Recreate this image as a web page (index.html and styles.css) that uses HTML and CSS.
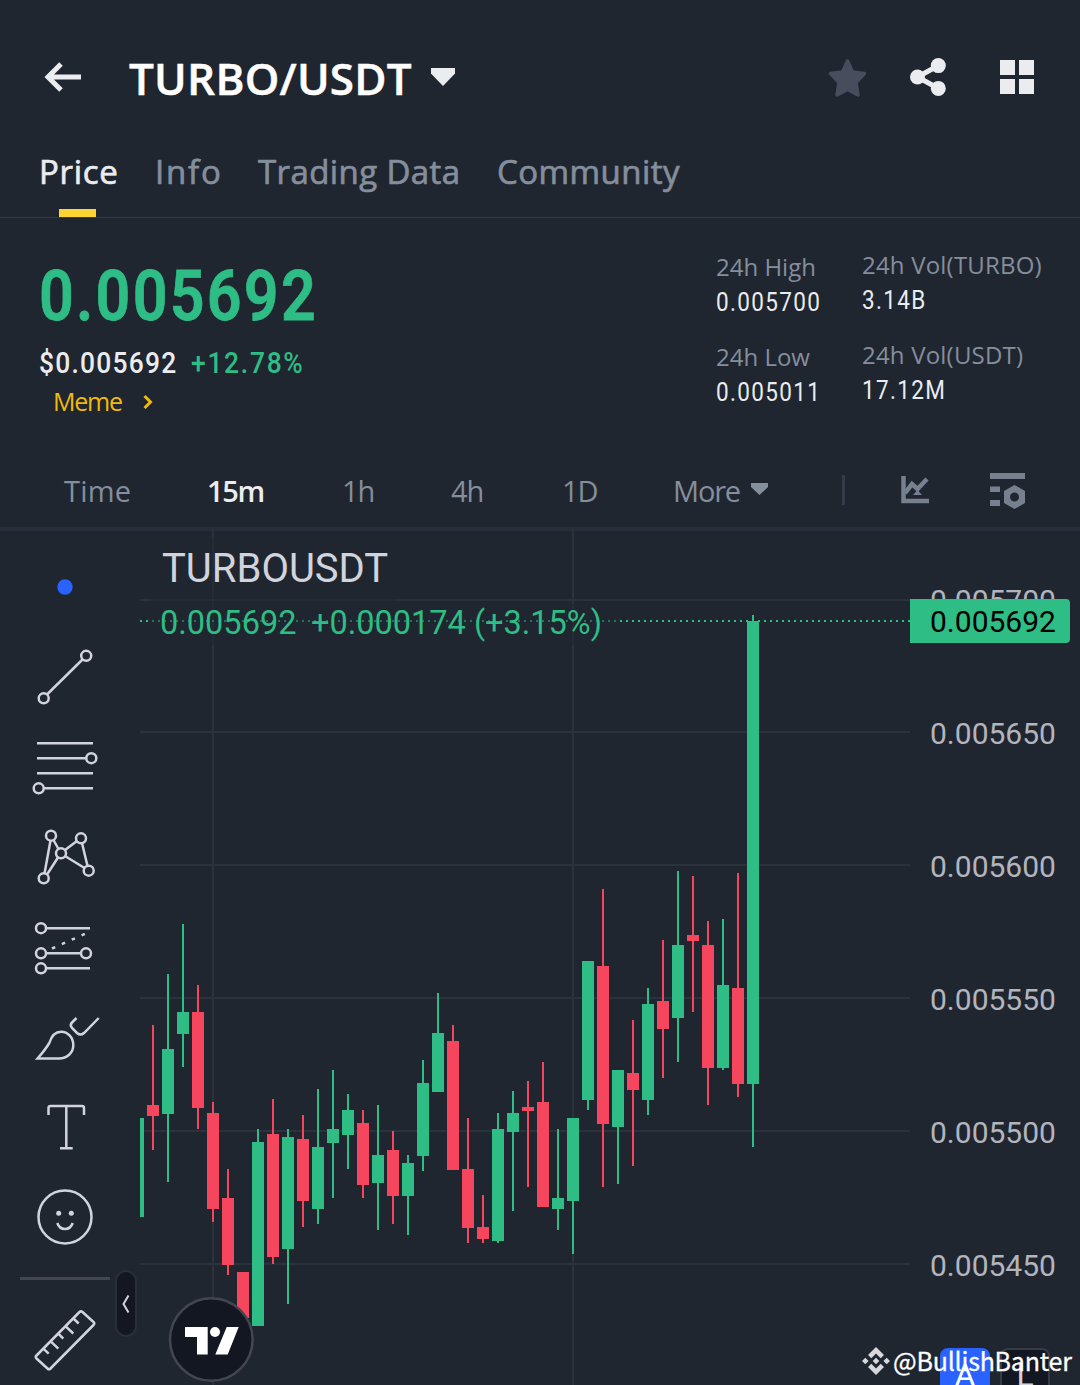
FILE: index.html
```html
<!DOCTYPE html>
<html lang="en">
<head>
<meta charset="utf-8">
<title>TURBO/USDT</title>
<link rel="stylesheet" href="styles.css">
</head>
<body>
<div class="app">
  <header class="header">
    <svg class="back" width="37" height="30" viewBox="0 0 37 30"><path d="M37 15H4M17 2L4 15L17 28" fill="none" stroke="#eaecef" stroke-width="5"/></svg>
    <h1 class="pair">TURBO/USDT</h1>
    <svg class="pair-caret" width="24" height="18" viewBox="0 0 24 18"><path d="M0 0H24V5.5L12 18L0 5.5Z" fill="#eaecef"/></svg>
    <div class="actions">
      <svg class="star" width="39" height="40" viewBox="0 0 39 40"><path d="M19.5 3L24.5 14L36.5 15.5L28 24.500L30 37L19.500 31.500L9 37L11 24.500L2.500 15.500L14.500 14Z" fill="#474d5c" stroke="#474d5c" stroke-width="3.500" stroke-linejoin="round"/></svg>
      <svg width="36" height="38" viewBox="0 0 36 38"><path d="M28.500 7.500L7.500 19L28.500 30.500" fill="none" stroke="#eaecef" stroke-width="5"/><g fill="#eaecef"><circle cx="28.300" cy="7.600" r="7.500"/><circle cx="7.500" cy="19" r="7.500"/><circle cx="28.300" cy="30.400" r="7.500"/></g></svg>
      <svg width="34" height="34" viewBox="0 0 34 34"><path d="M0 0H15V15H0ZM19 0H34V15H19ZM0 19H15V34H0ZM19 19H34V34H19Z" fill="#eaecef"/></svg>
    </div>
  </header>

  <nav class="tabs">
    <span class="tab tab-active">Price</span>
    <span class="tab tab-info">Info</span>
    <span class="tab tab-data">Trading Data</span>
    <span class="tab tab-community">Community</span>
  </nav>

  <section class="summary">
    <div class="quote">
      <div class="last">0.005692</div>
      <div class="sub"><span class="fiat">$0.005692</span><span class="change">+12.78%</span></div>
      <div class="tag"><span class="tag-name">Meme</span><svg width="10" height="14" viewBox="0 0 10 14"><path d="M1.500 1L7.500 7L1.500 13" fill="none" stroke="#f0b90b" stroke-width="3"/></svg></div>
    </div>
    <dl class="stats">
      <dt>24h High</dt><dd>0.005700</dd>
      <dt class="second">24h Low</dt><dd>0.005011</dd>
    </dl>
    <dl class="stats stats-vol">
      <dt>24h Vol(TURBO)</dt><dd>3.14B</dd>
      <dt class="second">24h Vol(USDT)</dt><dd>17.12M</dd>
    </dl>
  </section>

  <nav class="frames">
    <span class="frame-time">Time</span><span class="frame-active">15m</span><span>1h</span><span>4h</span><span>1D</span>
    <span class="more"><span class="more-name">More</span><svg width="17" height="12" viewBox="0 0 17 12"><path d="M0 0H17V4L8.500 12L0 4Z" fill="#848e9c"/></svg></span>
    <i class="bar"></i>
    <svg class="indicator" width="28" height="28" viewBox="0 0 28 28"><g fill="none" stroke="#76808f" stroke-width="4.500"><path d="M2.500 0V25H28"/><path d="M4 17L11 8L16.500 13L26 3"/></g><path d="M16.500 14L21 19H12Z" fill="#76808f"/></svg>
    <svg width="35" height="36" viewBox="0 0 35 36"><path d="M0 0H35V6H0ZM0 13.500H10V19H0ZM0 27H10V33H0Z" fill="#76808f"/><path fill-rule="evenodd" d="M24.500 12L35 18V30L24.500 36L14 30V18ZM24.500 19.500A4.500 4.500 0 1 0 24.500 28.500A4.500 4.500 0 1 0 24.500 19.500Z" fill="#76808f"/></svg>
  </nav>

  <main class="workspace">
    <aside class="tools">
      <svg class="tool" viewBox="0 0 90 90"><circle cx="45" cy="45" r="7.700" fill="#2962ff"/></svg>
      <svg class="tool" viewBox="0 0 90 90"><path d="M27 62.500L62.500 27.500"/><circle cx="23.700" cy="66.300" r="5"/><circle cx="66.200" cy="23.800" r="5"/></svg>
      <svg class="tool" viewBox="0 0 90 90"><path d="M17 21.200H73M17 36.200H66M17 51.200H73M24 66.300H73"/><circle cx="71.300" cy="36.200" r="5"/><circle cx="18.700" cy="66.300" r="5"/></svg>
      <svg class="tool" viewBox="0 0 90 90"><path d="M30.500 28.500L24.500 61.500M33.500 28L38.500 37M57 29L45 38M45 44L64.500 56M38 45.500L27 62.500M62 31L67.500 54"/><circle cx="31" cy="23.700" r="5"/><circle cx="61" cy="26.300" r="5"/><circle cx="41" cy="41.300" r="5"/><circle cx="68.700" cy="58.700" r="5"/><circle cx="23.700" cy="66.300" r="5"/></svg>
      <svg class="tool" viewBox="0 0 90 90"><path d="M26 26.200H70M26 51.300H61M26 66.300H70"/><path d="M32 46.500L68 30.500" stroke-dasharray="3.500 7.300"/><circle cx="21" cy="26.200" r="5"/><circle cx="21" cy="51.300" r="5"/><circle cx="66" cy="51.300" r="5"/><circle cx="21" cy="66.300" r="5"/></svg>
      <svg class="tool" viewBox="0 0 90 90"><path d="M17.500 66.500C22 61.500 26 56.500 29.300 51C31.500 44 35 39.700 41 39.700C48 39.700 53.300 45.500 53.300 53C53.300 61 47 66.500 39 66.500ZM56.500 26L52 30.500Q49.500 33 52 36L57 41Q60.500 44 64 41L78.700 26"/></svg>
      <svg class="tool" viewBox="0 0 90 90"><path d="M28.500 33V26Q28.500 24 30.500 24H62Q64 24 64 26V33M46.300 24V66.300M40 66.300H52.700"/></svg>
      <svg class="tool" viewBox="0 0 90 90"><circle cx="45" cy="45" r="26.500"/><path d="M37.300 51C40 59 50 59 52.700 51"/><g class="solid"><circle cx="38.700" cy="41.300" r="2.500"/><circle cx="51.300" cy="41.300" r="2.500"/></g></svg>
      <hr class="rule">
      <svg class="tool" viewBox="0 0 90 90"><path stroke-linejoin="round" d="M59.500 17Q61 15.700 62.500 17L73.500 27Q75 28.500 73.500 30L30.500 73.500Q29 75 27.500 73.500L16.500 63.500Q15 62 16.500 60.500ZM23.300 53.700L28.700 58.700M30.700 46.300L38.300 53.700M38.300 38.700L43.300 43.700M45.700 31.300L53.300 38.500M53.500 23.500L58.700 28.500"/></svg>
      <div class="collapse"><svg width="8" height="18" viewBox="0 0 8 18"><path d="M6.500 .5L1.500 9L6.500 17.500" fill="none" stroke="#d1d4dc" stroke-width="2"/></svg></div>
    </aside>

    <div class="chart">
      <svg class="plot" viewBox="140 531 940 854" width="940" height="854">
        <path class="grid" d="M140 600H910M140 732H910M140 865H910M140 998H910M140 1131H910M140 1264H910M213 528V1385M573 528V1385"/>
        <path class="last-line" d="M140 621H910"/>
        <path class="wick up" d="M168 974V1182M183 924V1067M258 1129V1326M288 1129V1304M318 1089V1224M333 1070V1198M348 1094V1169M378 1105V1230M408 1155V1235M423 1060V1171M438 993V1092M498 1113V1243M513 1091V1211M558 1129V1230M573 1118V1254M588 961V1110M618 1070V1184M648 988V1115M678 871V1062M723 919V1070M753 615V1147"/>
        <path class="wick down" d="M153 1025V1150M198 985V1129M213 1102V1222M228 1169V1275M273 1099V1264M303 1115V1227M363 1110V1198M393 1131V1224M453 1025V1170M468 1118V1243M483 1195V1243M528 1081V1187M543 1062V1207M603 889V1187M633 1020V1166M663 940V1078M693 876V1012M708 921V1105M738 873V1097"/>
        <path class="body up" d="M138 1118V1217M168 1049V1114M183 1012V1034M258 1142V1326M288 1137V1249M318 1147V1209M333 1129V1143M348 1110V1135M378 1155V1183M408 1163V1196M423 1083V1156M438 1033V1092M498 1129V1241M513 1113V1132M558 1198V1209M573 1118V1201M588 961V1100M618 1070V1127M648 1004V1100M678 945V1018M723 985V1068M753 621V1084"/>
        <path class="body down" d="M153 1105V1116M198 1012V1108M213 1113V1209M228 1198V1265M243 1272V1318M273 1134V1257M303 1139V1201M363 1123V1185M393 1150V1196M453 1041V1170M468 1169V1228M483 1227V1239M528 1107V1111M543 1102V1207M603 966V1124M633 1073V1090M663 1001V1029M693 935V941M708 945V1068M738 988V1084"/>
        <path class="shade" d="M150 537H398V603H617V646H150Z"/>
        <g class="axis">
          <text x="930" y="611">0.005700</text>
          <text x="930" y="744">0.005650</text>
          <text x="930" y="877">0.005600</text>
          <text x="930" y="1010">0.005550</text>
          <text x="930" y="1143">0.005500</text>
          <text x="930" y="1276">0.005450</text>
        </g>
        <path class="price-tag" d="M910 599H1066Q1070 599 1070 603V639Q1070 643 1066 643H910Z"/>
        <text class="price-text" x="930" y="632">0.005692</text>
        <text class="symbol" x="162" y="582">TURBOUSDT</text>
        <text class="ohlc" x="160" y="634">0.005692</text>
        <text class="ohlc" x="311" y="634">+0.000174 (+3.15%)</text>
        <circle cx="211.300" cy="1339.500" r="41.300" fill="#131722" stroke="#434651" stroke-width="2.500"/>
        <path fill="#fff" d="M185 1327H207.700V1354.500H197V1337H185ZM226.700 1327H238.700L227.700 1354.500H215.300Z"/>
        <circle cx="215" cy="1332" r="5" fill="#fff"/>
      </svg>
      <div class="scale-modes"><span class="mode mode-on">A</span><span class="mode">L</span></div>
      <div class="watermark">
        <svg width="28" height="28" viewBox="0 0 28 28"><g fill="#d6d8db"><path d="M14 0L22 8L18.700 11.300L14 6.600L9.300 11.300L6 8ZM14 28L22 20L18.700 16.700L14 21.400L9.300 16.700L6 20ZM14 10.700L17.300 14L14 17.300L10.700 14ZM3.300 10.700L6.600 14L3.300 17.300L0 14ZM24.700 10.700L28 14L24.700 17.300L21.400 14Z"/></g></svg>
        <span class="handle">@BullishBanter</span>
      </div>
    </div>
  </main>
</div>
</body>
</html>
```
FILE: styles.css
```css
* { box-sizing: border-box; }
body {
  margin: 0;
  background: #202630;
  color: #eaecef;
  font-family: "Open Sans", "Noto Sans", sans-serif;
}
.app {
  display: flex;
  flex-direction: column;
  width: 1080px;
  height: 1385px;
  overflow: hidden;
}
svg { display: block; flex: none; }

.header {
  display: flex;
  align-items: center;
  height: 128px;
  padding: 26px 46px 0 44px;
}
.pair {
  margin: 2px 0 0 48px;
  width: 302px;
  font-size: 44px;
  line-height: 60px;
  font-weight: 600;
  letter-spacing: .25px;
  -webkit-text-stroke: .5px #fff;
  color: #fff;
  white-space: nowrap;
}
.actions {
  display: flex;
  align-items: center;
  margin-left: auto;
}
.actions svg:nth-child(2) { margin: 0 54px 0 43px; }
.star { margin-top: 2px; }

.tabs {
  display: flex;
  height: 90px;
  padding-left: 39px;
  border-bottom: 1px solid #333b47;
  font-size: 33px;
  line-height: 88px;
  letter-spacing: .45px;
  -webkit-text-stroke: .7px currentColor;
  color: #848e9c;
  white-space: nowrap;
}
.tab { width: 116px; }
.tab-info { width: 103px; letter-spacing: 1.8px; }
.tab-data { width: 239px; letter-spacing: .4px; }
.tab-community { width: auto; }
.tab-active {
  position: relative;
  letter-spacing: .7px;
  color: #eaecef;
}
.tab-active::after {
  content: "";
  position: absolute;
  left: 20px;
  bottom: 0;
  width: 37px;
  height: 8px;
  background: #fcd535;
}

.summary {
  display: flex;
  height: 237px;
  padding-left: 39px;
}
.quote { width: 677px; padding-top: 38px; }
.last {
  font: 600 70px/80px Roboto, sans-serif;
  letter-spacing: 2.600px;
  transform: scaleX(.87);
  transform-origin: left;
  -webkit-text-stroke: .8px currentColor;
  color: #2ebd85;
}
.sub {
  display: flex;
  margin-top: 7px;
  font: 500 29px/40px Roboto, sans-serif;
}
.fiat, .change {
  letter-spacing: 1.350px;
  transform: scaleX(.91);
  transform-origin: left;
}
.fiat { width: 152px; }
.change { letter-spacing: 1.900px; color: #2ebd85; }
.tag {
  display: flex;
  align-items: center;
  padding-left: 14px;
  font-size: 25px;
  line-height: 38px;
  color: #f0b90b;
}
.tag-name { width: 90px; margin-top: -1px; letter-spacing: -1.200px; }
.stats { margin: 0; width: 146px; padding-top: 31px; white-space: nowrap; }
.stats-vol { width: auto; padding-top: 29px; }
.stats dt {
  font-size: 24px;
  line-height: 35px;
  color: #848e9c;
}
.stats-vol dt { letter-spacing: .2px; }
.stats dd {
  margin: 0;
  padding-top: 1px;
  font: 400 25px/35px Roboto, sans-serif;
  letter-spacing: 1.500px;
  transform: scaleX(.9);
  transform-origin: left;
}
.stats .second { margin-top: 19px; }

.frames {
  display: grid;
  grid-template-columns: 143px 135px 109px 111px 111px 169px 59px 89px 35px;
  align-items: center;
  height: 72px;
  padding-left: 64px;
  font-size: 29px;
  line-height: 40px;
  letter-spacing: -1.200px;
  color: #848e9c;
}
.frame-time { letter-spacing: .2px; }
.frame-active { color: #eaecef; font-weight: 600; letter-spacing: -1.300px; }
.more { display: flex; align-items: center; }
.more-name { width: 78px; }
.more svg { margin-top: -5px; }
.bar { width: 3px; height: 30px; margin-top: -2px; background: #353c49; }
.indicator { margin-top: -2px; }

.workspace {
  display: flex;
  height: 858px;
  border-top: 4px solid #282e39;
}
.tools {
  position: relative;
  width: 140px;
  padding: 11px 0 0 20px;
}
.tool {
  width: 90px;
  height: 90px;
  fill: none;
  stroke: #d1d4dc;
  stroke-width: 2.500px;
}
.tool:first-child { stroke: none; }
.solid { fill: #d1d4dc; stroke: none; }
.rule {
  width: 90px;
  height: 3px;
  margin: 15px 0;
  border: 0;
  background: #434651;
}
.collapse {
  position: absolute;
  left: 115px;
  top: 739px;
  width: 22px;
  height: 67px;
  display: flex;
  align-items: center;
  justify-content: center;
  background: #131722;
  border: 2px solid #2a2e39;
  border-radius: 11px;
}

.chart { position: relative; width: 940px; }
.plot { overflow: visible; clip-path: inset(-3px 0 0 0); }
.grid { fill: none; stroke: #2c323d; stroke-width: 2px; }
.last-line { stroke: #2ebd85; stroke-width: 2px; stroke-dasharray: 2 4; }
.wick { fill: none; stroke-width: 2px; }
.body { fill: none; stroke-width: 12px; }
.up { stroke: #2ebd85; }
.down { stroke: #f6465d; }
.shade { fill: #202630; fill-opacity: .5; }
.plot text { font-family: Roboto, sans-serif; }
.axis text, .price-text { font-size: 30px; }
.axis { fill: #b2b5be; }
.price-tag { fill: #2ebd85; }
.price-text { fill: #000; }
.symbol { font-size: 40px; fill: #d1d4dc; }
.ohlc { font-size: 32.500px; fill: #2ebd85; }

.scale-modes {
  position: absolute;
  left: 800px;
  top: 817px;
  display: flex;
  gap: 10px;
}
.mode {
  width: 50px;
  height: 50px;
  border: 2px solid #363a45;
  border-radius: 8px;
  background: #131722;
  color: #d1d4dc;
  font: 400 32px/50px Roboto, sans-serif;
  text-align: center;
}
.mode-on { background: #2962ff; border-color: #2962ff; color: #fff; }
.watermark {
  position: absolute;
  left: 722px;
  top: 812px;
  display: flex;
  align-items: center;
  gap: 3px;
  font: 400 25px/36px "Noto Sans CJK SC", sans-serif;
  color: #fff;
}
.handle {
  margin-top: -1px;
  letter-spacing: -.200px;
  -webkit-text-stroke: .3px #fff;
}
```
